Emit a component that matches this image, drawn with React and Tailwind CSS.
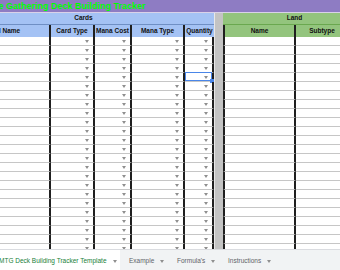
import React from "react";

const cols = "grid-cols-[98px_44px_37px_53px_29px_9px_73px_52px_40px]";

const Arrow = () => (
    <svg width="4" height="3" viewBox="0 0 4 3" className="shrink-0">
        <path d="M0 0 L4 0 L2 3 Z" fill="#8f8f8f" />
    </svg>
);

const DataRow = ({ selected }) => {
    const cell = "h-full border-b border-[#c6c6c6] border-r-2 border-r-[#1f1f1f]";
    const drop = `${cell} flex items-center justify-end pr-[4px]`;
    return (
        <div className={`grid ${cols} h-[9px]`}>
            <div className={cell} />
            <div className={drop}><Arrow /></div>
            <div className={drop}><Arrow /></div>
            <div className={drop}><Arrow /></div>
            <div className={`${drop} relative border-r-0`}>
                <Arrow />
                {selected && (
                    <>
                        <div className="absolute inset-0 -top-px border border-[#4a86e8]" />
                        <div className="absolute -right-[2px] -bottom-[2px] w-[4px] h-[4px] bg-[#4a86e8]" />
                    </>
                )}
            </div>
            <div className="h-full bg-[#c3c3c3] border-l border-[#e8e8e8]" />
            <div className={`${cell} border-l-2 border-l-[#1f1f1f]`} />
            <div className={`${cell} border-r-0`} />
            <div className="h-full border-b border-[#c6c6c6]" />
        </div>
    );
};

const Tab = ({ label, width, pad, active }) => (
    <div
        className={`h-full shrink-0 flex items-center gap-[6px] pt-[2px] ${width} ${pad} ${
            active ? "bg-white text-[#188038] font-medium" : "text-[#5f6368]"
        }`}
    >
        <span>{label}</span>
        <Arrow />
    </div>
);

const App = () => {
    const rows = Array.from({ length: 25 }, (_, i) => i);
    const head = "flex items-center justify-center font-bold text-[6.5px] text-[#111] leading-none";

    return (
        <div className="w-[340px] h-[270px] overflow-hidden flex flex-col bg-white font-['Liberation_Sans',Arial,sans-serif]">
            {/* Sheet */}
            <div className="flex-1 overflow-hidden">
                <div className="-ml-[47px] w-[440px]">
                    {/* Title */}
                    <div className="h-[13px] bg-[#8e7cc3] flex items-center pl-[6px] border-b border-[#d9d2e9]">
                        <span className="font-bold text-[9px] text-[#00ff00] leading-[12px] whitespace-nowrap">
                            Magic: the Gathering Deck Building Tracker
                        </span>
                    </div>

                    {/* Section headers */}
                    <div className={`grid ${cols} h-[12px]`}>
                        <div className={`col-span-5 bg-[#a4c2f4] border-b border-[#6f8fc4] ${head}`}>Cards</div>
                        <div className="bg-[#c3c3c3] border-l border-[#e8e8e8]" />
                        <div className={`col-span-3 bg-[#93c47d] border-b border-[#6aa84f] ${head} pr-[22px]`}>Land</div>
                    </div>

                    {/* Column headers */}
                    <div className={`grid ${cols} h-[12px]`}>
                        <div className={`bg-[#a4c2f4] border-r-2 border-[#1f1f1f] ${head} pl-[4px]`}>Card Name</div>
                        <div className={`bg-[#a4c2f4] border-r-2 border-[#1f1f1f] ${head}`}>Card Type</div>
                        <div className={`bg-[#a4c2f4] border-r-2 border-[#1f1f1f] ${head}`}>Mana Cost</div>
                        <div className={`bg-[#a4c2f4] border-r-2 border-[#1f1f1f] ${head}`}>Mana Type</div>
                        <div className={`bg-[#a4c2f4] ${head}`}>Quantity</div>
                        <div className="bg-[#c3c3c3] border-l border-[#e8e8e8]" />
                        <div className={`bg-[#93c47d] border-l-2 border-r-2 border-[#1f1f1f] ${head}`}>Name</div>
                        <div className={`bg-[#93c47d] ${head}`}>Subtype</div>
                        <div className="bg-[#93c47d]" />
                    </div>

                    {rows.map((r) => (
                        <DataRow key={r} selected={r === 4} />
                    ))}
                </div>
            </div>

            {/* Sheet tabs */}
            <div className="h-[21px] shrink-0 bg-[#f1f3f4] border-t border-[#dadce0] flex items-center text-[6.5px] leading-none whitespace-nowrap">
                <Tab label="MTG Deck Building Tracker Template" width="w-[122px] -ml-[2px]" pad="pl-[1px]" active />
                <Tab label="Example" width="w-[50px]" pad="pl-[9px]" />
                <Tab label="Formula's" width="w-[51px]" pad="pl-[7px]" />
                <Tab label="Instructions" width="w-[60px]" pad="pl-[7px]" />
            </div>
        </div>
    );
};

export default App;
